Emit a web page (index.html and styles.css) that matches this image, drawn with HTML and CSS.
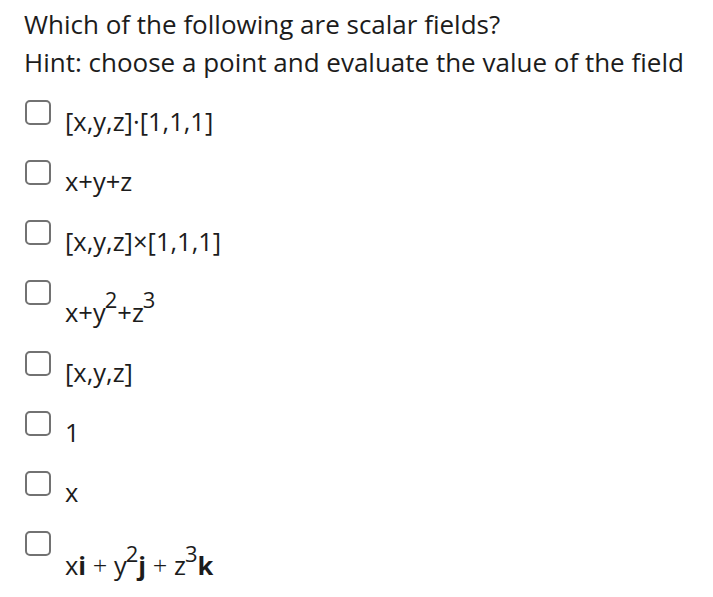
FILE: index.html
```html
<!DOCTYPE html>
<html lang="en">
<head>
<meta charset="utf-8">
<title>Scalar fields question</title>
<link rel="stylesheet" href="styles.css">
</head>
<body>
<div class="question">
  <p class="prompt">Which of the following are scalar fields?</p>
  <p class="hint">Hint: choose a point and evaluate the value of the field</p>
  <ul class="options">
    <li class="option"><span class="box"></span><span class="label">[x,y,z]·[1,1,1]</span></li>
    <li class="option"><span class="box"></span><span class="label">x+y+z</span></li>
    <li class="option"><span class="box"></span><span class="label">[x,y,z]×[1,1,1]</span></li>
    <li class="option tall"><span class="box"></span><span class="label">x+y<sup>2</sup>+z<sup>3</sup></span></li>
    <li class="option"><span class="box"></span><span class="label">[x,y,z]</span></li>
    <li class="option"><span class="box"></span><span class="label">1</span></li>
    <li class="option"><span class="box"></span><span class="label">x</span></li>
    <li class="option tall"><span class="box"></span><span class="label vec">x<b>i</b> <span class="op">+</span> y<sup>2</sup><b>j</b> <span class="op">+</span> z<sup>3</sup><b>k</b></span></li>
  </ul>
</div>
</body>
</html>
```
FILE: styles.css
```css
html, body {
  margin: 0;
  padding: 0;
  background: #ffffff;
}
body {
  font-family: "Open Sans", "DejaVu Sans", sans-serif;
  color: #1c1c1c;
}
.question {
  padding: 5px 24px 0 24px;
}
.prompt, .hint {
  margin: 0;
  font-size: 26px;
  line-height: 38px;
}
.options {
  list-style: none;
  margin: 19px 0 0 0;
  padding: 0;
}
.option {
  display: flex;
  align-items: flex-start;
  gap: 14px;
  margin-bottom: 26px;
}
.box {
  flex: none;
  width: 22px;
  height: 21px;
  border: 2px solid #727272;
  border-radius: 5px;
  margin-left: 1px;
}
.label {
  font-size: 25.5px;
  line-height: 26px;
  padding-top: 8px;
}
.tall .label {
  padding-top: 19px;
}
.label sup {
  font-size: 22px;
  line-height: 0;
  vertical-align: 14px;
  margin-left: -1px;
}
.tall .vec {
  padding-top: 21px;
}
.vec sup {
  vertical-align: 13px;
}
.label b {
  font-weight: 700;
}
.op {
  font-weight: 300;
}
```
